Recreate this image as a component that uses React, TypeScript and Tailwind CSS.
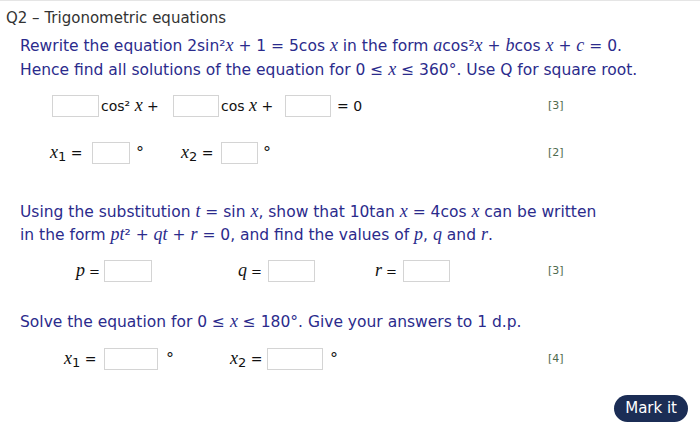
import React from 'react'

const V = ({ children }: { children: React.ReactNode }) => (
  <span className="font-['Liberation_Serif',serif] italic text-[18px] leading-none">{children}</span>
)

const Box = ({ w }: { w: string }) => (
  <span className={`inline-block shrink-0 h-[22px] border border-[#d4d4d4] bg-white ${w}`} />
)

const Mark = ({ n }: { n: number }) => (
  <span className="text-[11px] text-[#4f6b4f]">[{n}]</span>
)

export default function App() {
  return (
    <div className="w-[700px] h-[430px] bg-white border-t border-[#e5e5e5] font-['DejaVu_Sans',sans-serif] text-[15.5px] relative whitespace-nowrap">
      <div className="pl-[6px] pt-[6px] h-[29px] text-[15px] text-[#333]">Q2 – Trigonometric equations</div>
      <div className="pl-[20px] text-[#2b2b8c] leading-[24px] mt-[4px]">
        <div>
          Rewrite the equation 2sin²<V>x</V> + 1 = 5cos <V>x</V> in the form <V>a</V>cos²<V>x</V> +{' '}
          <V>b</V>cos <V>x</V> + <V>c</V> = 0.
        </div>
        <div>
          Hence find all solutions of the equation for 0 ≤ <V>x</V> ≤ 360°. Use Q for square root.
        </div>
      </div>

      <div className="flex items-center mt-[13px] h-[22px] text-[14px] text-[#111]">
        <div className="w-[548px] flex items-center pl-[52px]">
          <Box w="w-[47px]" />
          <span className="w-[74px] pl-[2px]">
            cos² <V>x</V> +
          </span>
          <Box w="w-[46px]" />
          <span className="w-[66px] pl-[2px]">
            cos <V>x</V> +
          </span>
          <Box w="w-[46px]" />
          <span className="pl-[6px]">= 0</span>
        </div>
        <Mark n={3} />
      </div>

      <div className="flex items-center mt-[25px] h-[22px] text-[14px] text-[#111]">
        <div className="w-[548px] flex items-center pl-[50px]">
          <span className="w-[42px]">
            <V>x</V><sub className="text-[13px]">1</sub> =
          </span>
          <Box w="w-[38px]" />
          <span className="w-[51px] pl-[6px] text-[16px]">°</span>
          <span className="w-[40px]">
            <V>x</V><sub className="text-[13px]">2</sub> =
          </span>
          <Box w="w-[37px]" />
          <span className="pl-[5px] text-[16px]">°</span>
        </div>
        <Mark n={2} />
      </div>

      <div className="pl-[20px] text-[#2b2b8c] leading-[23px] mt-[37px]">
        <div>
          Using the substitution <V>t</V> = sin <V>x</V>, show that 10tan <V>x</V> = 4cos <V>x</V> can be written
        </div>
        <div>
          in the form <V>pt</V>² + <V>qt</V> + <V>r</V> = 0, and find the values of <V>p</V>, <V>q</V> and{' '}
          <V>r</V>.
        </div>
      </div>

      <div className="flex items-center mt-[13px] h-[22px] text-[13px] text-[#111]">
        <div className="w-[548px] flex items-center pl-[60px]">
          <span className="w-[44px] text-right pr-[4px]">
            <V>p</V> =
          </span>
          <Box w="w-[48px]" />
          <span className="w-[116px] text-right pr-[6px]">
            <V>q</V> =
          </span>
          <Box w="w-[47px]" />
          <span className="w-[88px] text-right pr-[6px]">
            <V>r</V> =
          </span>
          <Box w="w-[47px]" />
        </div>
        <Mark n={3} />
      </div>

      <div className="pl-[20px] text-[#2b2b8c] leading-[23px] mt-[29px]">
        Solve the equation for 0 ≤ <V>x</V> ≤ 180°. Give your answers to 1 d.p.
      </div>

      <div className="flex items-center mt-[14px] h-[22px] text-[14px] text-[#111]">
        <div className="w-[548px] flex items-center pl-[64px]">
          <span className="w-[40px]">
            <V>x</V><sub className="text-[13px]">1</sub> =
          </span>
          <Box w="w-[54px]" />
          <span className="w-[72px] pl-[8px] text-[16px]">°</span>
          <span className="w-[37px]">
            <V>x</V><sub className="text-[13px]">2</sub> =
          </span>
          <Box w="w-[56px]" />
          <span className="pl-[7px] text-[16px]">°</span>
        </div>
        <Mark n={4} />
      </div>

      <div className="flex justify-end pr-[12px] mt-[25px]">
        <button className="h-[27px] px-[11px] rounded-full bg-[#1b2d55] text-white text-[15px]">Mark it</button>
      </div>
    </div>
  )
}
